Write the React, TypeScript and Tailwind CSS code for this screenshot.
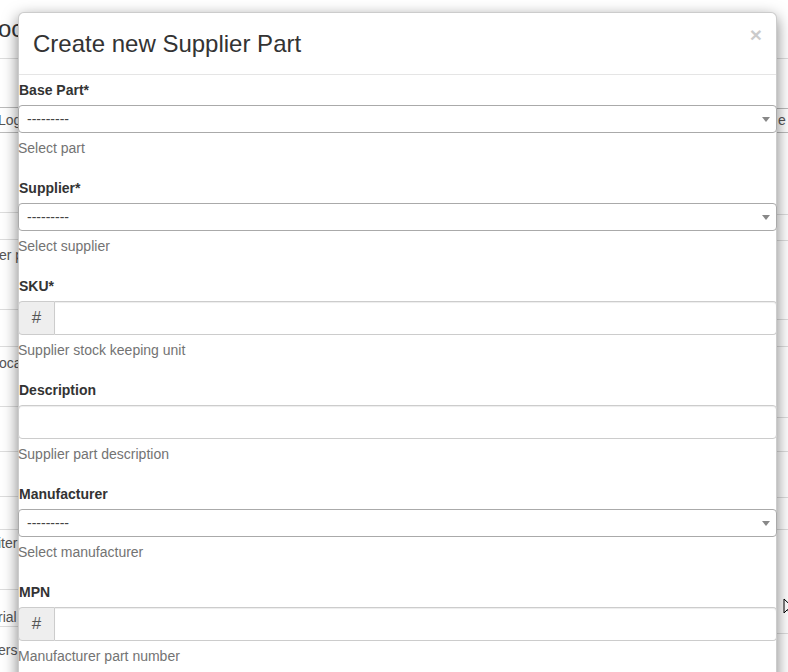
import React from "react";

const font = { fontFamily: '"Liberation Sans", Arial, Helvetica, sans-serif' };

function SelectBox() {
  return (
    <div className="relative h-[28px] rounded-[4px] border border-[#aaa] bg-white">
      <span className="block pl-[8px] text-[14px] leading-[26px] text-[#444]">---------</span>
      <span className="absolute right-[6px] top-[11px] h-0 w-0 border-x-[4px] border-t-[5px] border-x-transparent border-t-[#888]" />
    </div>
  );
}

function HashInput() {
  return (
    <div className="flex h-[34px]">
      <span className="flex w-[37px] items-center justify-center rounded-l-[4px] border border-[#ccc] bg-[#eee] text-[17px] text-[#555]">
        #
      </span>
      <input
        className="min-w-0 flex-1 rounded-r-[4px] border border-l-0 border-[#ccc] bg-white shadow-[inset_0_1px_1px_rgba(0,0,0,0.075)] outline-none"
        type="text"
      />
    </div>
  );
}

function TextInput() {
  return (
    <input
      className="block h-[34px] w-full rounded-[4px] border border-[#ccc] bg-white shadow-[inset_0_1px_1px_rgba(0,0,0,0.075)] outline-none"
      type="text"
    />
  );
}

function Field({ label, help, children }: { label: string; help: string; children: React.ReactNode }) {
  return (
    <div>
      <label className="mb-[5px] block pl-px text-[14px] font-bold leading-[20px] text-[#333]">{label}</label>
      {children}
      <p className="mb-[20px] mt-[5px] text-[14px] leading-[20px] text-[#737373]">{help}</p>
    </div>
  );
}

export default function App() {
  return (
    <div className="relative h-[672px] w-[788px] overflow-hidden bg-white text-[#333]" style={font}>
      {/* page behind the modal */}
      <div className="flex h-full">
        <div className="w-[18px] overflow-hidden whitespace-nowrap text-[14px] text-[#555]">
          <div className="flex h-[59px] items-center border-b border-[#ddd] text-[24px] text-[#333]">
            <span className="-ml-[2px]">ock</span>
          </div>
          <div className="h-[48px]" />
          <div className="h-[26px] border-y border-[#bbb] leading-[24px]">
            <span className="-ml-[2px] block">Log</span>
          </div>
          <div className="h-[80px] border-b border-[#ddd]" />
          <div className="h-[27px] border-b border-[#ddd]" />
          <div className="h-[70px] border-b border-[#ddd] pt-[5px] leading-[20px]">
            <span className="-ml-[1px] block">er p</span>
          </div>
          <div className="h-[37px] border-b border-[#ddd]" />
          <div className="h-[60px] border-b border-[#ddd] pt-[6px] leading-[20px]">
            <span className="-ml-[1px] block">oca</span>
          </div>
          <div className="h-[45px] border-b border-[#ddd]" />
          <div className="h-[45px] border-b border-[#ddd]" />
          <div className="h-[33px] border-b border-[#ddd]" />
          <div className="h-[60px] border-b border-[#ddd] pt-[3px] leading-[20px]">
            <span className="-ml-[2px] block">iter</span>
          </div>
          <div className="h-[37px] border-b border-[#ddd] pt-[17px] leading-[20px]">
            <span className="-ml-[2px] block">rial</span>
          </div>
          <div className="pt-[13px] leading-[20px]">
            <span className="-ml-[2px] block">ers</span>
          </div>
        </div>
        <div className="flex-1" />
        <div className="w-[11px] overflow-hidden whitespace-nowrap text-[14px] text-[#555]">
          <div className="h-[59px] border-b border-[#ddd]" />
          <div className="h-[49px]" />
          <div className="h-[25px] border-y border-[#bbb] leading-[23px]">
            <span className="block pl-[1px]">e e</span>
          </div>
          <div className="h-[82px] border-b border-[#ddd]" />
          <div className="h-[26px] border-b border-[#ddd]" />
          <div className="h-[79px] border-b border-[#ddd]" />
          <div className="h-[27px] border-b border-[#ddd]" />
          <div className="h-[71px] border-b border-[#ddd]" />
          <div className="h-[34px] border-b border-[#ddd]" />
          <div className="h-[46px] border-b border-[#ddd]" />
          <div className="h-[32px] border-b border-[#ddd]" />
          <div className="relative h-[104px] border-b border-[#ddd]">
            <svg className="absolute left-[6px] top-[68px]" width="10" height="18" viewBox="0 0 10 18">
              <path d="M1 1 L1 15 L4.5 11.5 L7 17 L9 16 L6.5 10.5 L11 10.5 Z" fill="#fff" stroke="#000" strokeWidth="1" />
            </svg>
          </div>
        </div>
      </div>

      {/* modal */}
      <div className="absolute left-[18px] top-[12px] w-[759px] rounded-[6px] border border-black/20 bg-white shadow-[0_5px_15px_rgba(0,0,0,0.5)]">
        <div className="flex h-[62px] justify-between border-b border-[#e5e5e5] px-[14px]">
          <h3 className="self-center text-[24px] leading-[34px] text-[#333]">Create new Supplier Part</h3>
          <button className="mt-[11px] self-start text-[21px] font-bold leading-none text-black opacity-20">
            ×
          </button>
        </div>
        <div className="-mx-px pt-[5px]">
          <Field label="Base Part*" help="Select part">
            <SelectBox />
          </Field>
          <Field label="Supplier*" help="Select supplier">
            <SelectBox />
          </Field>
          <Field label="SKU*" help="Supplier stock keeping unit">
            <HashInput />
          </Field>
          <Field label="Description" help="Supplier part description">
            <TextInput />
          </Field>
          <Field label="Manufacturer" help="Select manufacturer">
            <SelectBox />
          </Field>
          <Field label="MPN" help="Manufacturer part number">
            <HashInput />
          </Field>
        </div>
      </div>
    </div>
  );
}
